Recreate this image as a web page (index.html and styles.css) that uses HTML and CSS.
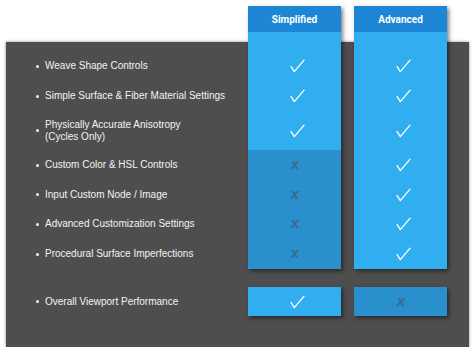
FILE: index.html
```html
<!DOCTYPE html>
<html>
<head>
<meta charset="utf-8">
<link rel="stylesheet" href="styles.css">
</head>
<body>
<div class="panel">
  <ul class="features">
    <li class="row r30"><span class="dot"></span><span>Weave Shape Controls</span></li>
    <li class="row r30"><span class="dot"></span><span>Simple Surface &amp; Fiber Material Settings</span></li>
    <li class="row r39"><span class="dot"></span><span>Physically Accurate Anisotropy<br>(Cycles Only)</span></li>
    <li class="row r30"><span class="dot"></span><span>Custom Color &amp; HSL Controls</span></li>
    <li class="row r29"><span class="dot"></span><span>Input Custom Node / Image</span></li>
    <li class="row r30"><span class="dot"></span><span>Advanced Customization Settings</span></li>
    <li class="row r30"><span class="dot"></span><span>Procedural Surface Imperfections</span></li>
  </ul>

  <div class="card">
    <div class="card-head">Simplified</div>
    <div class="spacer"></div>
    <div class="cell r30"><svg class="check" viewBox="0 0 16 14"><path d="M1.2 7.6 L4.6 13 L15 0.8"/></svg></div>
    <div class="cell r30"><svg class="check" viewBox="0 0 16 14"><path d="M1.2 7.6 L4.6 13 L15 0.8"/></svg></div>
    <div class="cell r39"><svg class="check" viewBox="0 0 16 14"><path d="M1.2 7.6 L4.6 13 L15 0.8"/></svg></div>
    <div class="cell r30 off"><span class="ex">x</span></div>
    <div class="cell r29 off"><span class="ex">x</span></div>
    <div class="cell r30 off"><span class="ex">x</span></div>
    <div class="cell r30 off"><span class="ex">x</span></div>
  </div>

  <div class="card">
    <div class="card-head">Advanced</div>
    <div class="spacer"></div>
    <div class="cell r30"><svg class="check" viewBox="0 0 16 14"><path d="M1.2 7.6 L4.6 13 L15 0.8"/></svg></div>
    <div class="cell r30"><svg class="check" viewBox="0 0 16 14"><path d="M1.2 7.6 L4.6 13 L15 0.8"/></svg></div>
    <div class="cell r39"><svg class="check" viewBox="0 0 16 14"><path d="M1.2 7.6 L4.6 13 L15 0.8"/></svg></div>
    <div class="cell r30"><svg class="check" viewBox="0 0 16 14"><path d="M1.2 7.6 L4.6 13 L15 0.8"/></svg></div>
    <div class="cell r29"><svg class="check" viewBox="0 0 16 14"><path d="M1.2 7.6 L4.6 13 L15 0.8"/></svg></div>
    <div class="cell r30"><svg class="check" viewBox="0 0 16 14"><path d="M1.2 7.6 L4.6 13 L15 0.8"/></svg></div>
    <div class="cell r30"><svg class="check" viewBox="0 0 16 14"><path d="M1.2 7.6 L4.6 13 L15 0.8"/></svg></div>
  </div>

  <div class="row r29 bottom-label"><span class="dot"></span><span>Overall Viewport Performance</span></div>
  <div class="box"><svg class="check" viewBox="0 0 16 14"><path d="M1.2 7.6 L4.6 13 L15 0.8"/></svg></div>
  <div class="box off"><span class="ex">x</span></div>
</div>
</body>
</html>
```

FILE: styles.css
```css
html, body {
  margin: 0;
  padding: 0;
  background: #ffffff;
}

body {
  font-family: "Liberation Sans", Arial, sans-serif;
}

.panel {
  margin: 42px 0 0 6px;
  width: 463px;
  height: 305px;
  box-sizing: border-box;
  padding: 9px 0 31px 0;
  background: #4e4e4e;
  box-shadow: 0 0 3px rgba(0, 0, 0, 0.45);
  display: grid;
  grid-template-columns: 229px 93px 93px;
  column-gap: 13px;
  row-gap: 18px;
  grid-template-rows: 218px 29px;
}

.features {
  list-style: none;
  margin: 0;
  padding: 0;
}

.row {
  display: flex;
  align-items: center;
  padding-left: 30px;
  color: #f3f3f3;
  font-size: 10px;
  line-height: 12px;
  white-space: nowrap;
}

.dot {
  width: 3px;
  height: 3px;
  border-radius: 50%;
  background: #f3f3f3;
  margin-right: 6px;
  flex: none;
}

.r29 { height: 29px; }
.r30 { height: 30px; }
.r39 { height: 39px; }

.card {
  margin-top: -45px;
  height: 263px;
  background: #31aef0;
  box-shadow: 2px 2px 4px rgba(0, 0, 0, 0.5);
  display: flex;
  flex-direction: column;
}

.card-head {
  height: 26px;
  flex: none;
  background: #1d87d5;
  color: #ffffff;
  font-family: Roboto, "Liberation Sans", sans-serif;
  font-weight: bold;
  font-size: 10px;
  display: flex;
  align-items: center;
  justify-content: center;
}

.spacer {
  height: 19px;
  flex: none;
}

.cell {
  flex: none;
  display: flex;
  align-items: center;
  justify-content: center;
}

.off {
  background: #2a8fcd;
}

.check {
  width: 15px;
  height: 14px;
  margin-left: 6px;
  fill: none;
  stroke: #ffffff;
  stroke-width: 1.4;
  stroke-linecap: round;
  stroke-linejoin: round;
}

.ex {
  font-family: "Liberation Sans", Arial, sans-serif;
  font-weight: bold;
  font-style: italic;
  font-size: 15px;
  line-height: 15px;
  color: #3b6a8f;
  margin-left: 1px;
  margin-top: -3px;
}

.box {
  background: #31aef0;
  box-shadow: 2px 2px 4px rgba(0, 0, 0, 0.5);
  display: flex;
  align-items: center;
  justify-content: center;
}

.box.off {
  background: #2a8fcd;
}
```
